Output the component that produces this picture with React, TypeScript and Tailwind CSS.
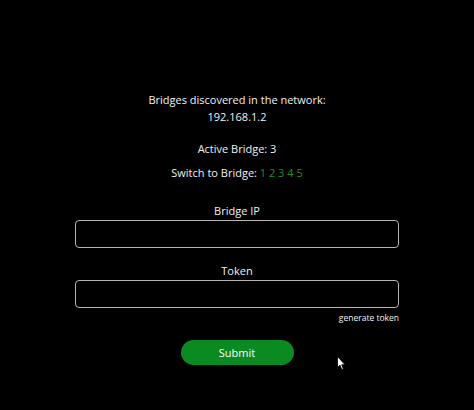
import React from "react";

export default function App() {
  return (
    <div
      className="relative w-[474px] h-[410px] bg-black text-[#f0f0f0] overflow-hidden"
      style={{ fontFamily: '"Open Sans", "Noto Sans", sans-serif' }}
    >
      <div className="flex flex-col items-center pt-[91px] text-[11px] leading-[17px]">
        <div>Bridges discovered in the network:</div>
        <div>192.168.1.2</div>
        <div className="mt-[15px]">Active Bridge: 3</div>
        <div className="mt-[7px]">
          Switch to Bridge:{" "}
          <span className="text-[#1f8f2f]">1 2 3 4 5</span>
        </div>
        <div className="w-[324px] flex flex-col items-center mt-[21px]">
          <div>Bridge IP</div>
          <input className="mt-[1px] w-full h-[28px] rounded-[4px] border border-[#b4b4b4] bg-black outline-none" />
          <div className="mt-[14px]">Token</div>
          <input className="mt-[1px] w-full h-[28px] rounded-[4px] border border-[#b4b4b4] bg-black outline-none" />
          <div className="self-end text-[8.5px] leading-[12px] mt-[4px]">generate token</div>
          <button className="mt-[16px] w-[113px] h-[25px] rounded-full bg-[#0c8a22] text-white text-[11px]">
            Submit
          </button>
        </div>
      </div>
      <svg
        className="absolute left-[337px] top-[356px]"
        width="10"
        height="15"
        viewBox="0 0 10 15"
      >
        <path
          d="M0.5 0.5 L0.5 11.5 L3 9.2 L4.8 13.5 L6.4 12.8 L4.7 8.7 L8 8.7 Z"
          fill="white"
          stroke="black"
          strokeWidth="0.8"
        />
      </svg>
    </div>
  );
}
